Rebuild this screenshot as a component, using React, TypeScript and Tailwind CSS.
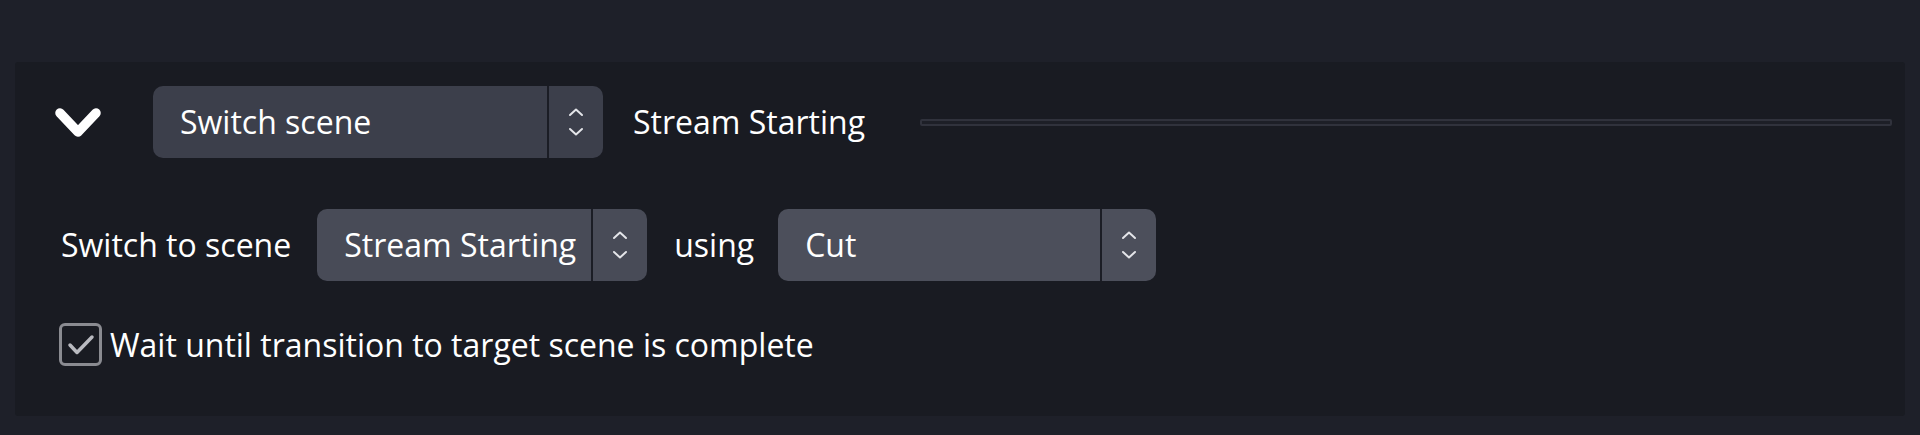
import React from "react";

function Spinner() {
  return (
    <svg width="16" height="30" viewBox="0 0 16 30" fill="none" stroke="#e4e5e9" strokeWidth="2" strokeLinecap="round" strokeLinejoin="round">
      <polyline points="2,8 8,2.5 14,8" />
      <polyline points="2,22 8,27.5 14,22" />
    </svg>
  );
}

function Select({ label, width, bg }: { label: string; width: string; bg: string }) {
  return (
    <div className={`flex h-[72px] ${width} ${bg} items-stretch overflow-hidden rounded-[10px]`}>
      <div className="flex flex-1 items-center pl-[27px] text-white">{label}</div>
      <div className="w-[2px] bg-[#1b1d25]" />
      <div className="flex w-[54px] items-center justify-center">
        <Spinner />
      </div>
    </div>
  );
}

export default function App() {
  return (
    <div
      className="h-[435px] w-full bg-[#1e2029] px-[15px] pt-[62px] text-[32px] leading-none text-white"
      style={{ fontFamily: '"Open Sans", "Noto Sans", sans-serif' }}
    >
      <div className="h-[354px] rounded-[3px] bg-[#191b22] pt-[24px]">
        {/* action header */}
        <div className="flex h-[72px] items-center pr-[13px]">
          <svg className="ml-[40px] mt-[2px]" width="46" height="30" viewBox="0 0 46 30" fill="none" stroke="#ffffff" strokeWidth="9.5" strokeLinecap="round" strokeLinejoin="round">
            <polyline points="5,5 23,24 41,5" />
          </svg>
          <div className="ml-[52px]">
            <Select label="Switch scene" width="w-[450px]" bg="bg-[#3c3f4b]" />
          </div>
          <span className="ml-[30px]">Stream Starting</span>
          <div className="ml-[55px] h-[7px] flex-1 rounded-[2px] border-2 border-[#30323c] bg-[#1d1f27]" />
        </div>

        {/* target scene */}
        <div className="mt-[51px] flex h-[72px] items-center pl-[46px]">
          <span>Switch to scene</span>
          <div className="ml-[26px]">
            <Select label="Stream Starting" width="w-[330px]" bg="bg-[#484b57]" />
          </div>
          <span className="ml-[27px]">using</span>
          <div className="ml-[24px]">
            <Select label="Cut" width="w-[378px]" bg="bg-[#4c4f5b]" />
          </div>
        </div>

        {/* wait option */}
        <div className="mt-[42px] flex items-center pl-[44px]">
          <div className="flex h-[43px] w-[43px] items-center justify-center rounded-[6px] border-[3px] border-[#8a8b91]">
            <svg width="28" height="22" viewBox="0 0 28 22" fill="none" stroke="#b9bac0" strokeWidth="3.5" strokeLinecap="round" strokeLinejoin="round">
              <polyline points="3,11 10,18.5 25,3" />
            </svg>
          </div>
          <span className="ml-[8px]">Wait until transition to target scene is complete</span>
        </div>
      </div>
    </div>
  );
}
